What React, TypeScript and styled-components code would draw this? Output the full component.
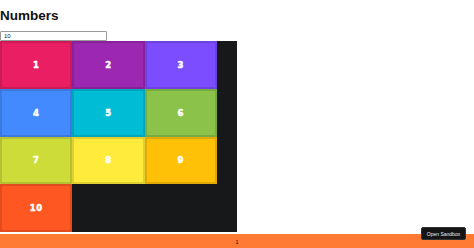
import React, { useState } from 'react';
import styled, { createGlobalStyle } from 'styled-components';

const GlobalStyle = createGlobalStyle`
  html, body {
    margin: 0;
    padding: 0;
    background: #ffffff;
    font-family: "Liberation Sans", Arial, sans-serif;
  }
`;

const COLORS = [
  '#e91e63',
  '#9c27b0',
  '#7c4dff',
  '#448aff',
  '#00bcd4',
  '#8bc34a',
  '#cddc39',
  '#ffeb3b',
  '#ffc107',
  '#ff5722',
];

const Page = styled.div`
  display: flex;
  flex-direction: column;
`;

const Title = styled.h1`
  margin: 7px 0 0;
  height: 24px;
  font-size: 13.5px;
  line-height: 17px;
  font-weight: 700;
  color: #111111;
`;

const CountInput = styled.input`
  box-sizing: border-box;
  width: 107px;
  height: 10px;
  margin: 0;
  padding: 0 3px;
  border: 1px solid #9a9a9a;
  border-radius: 1px;
  font-family: "Liberation Sans", Arial, sans-serif;
  font-size: 6px;
  color: #222222;
  outline: none;
`;

const Grid = styled.div`
  display: grid;
  grid-template-columns: repeat(3, 72.3px);
  grid-auto-rows: 47.75px;
  width: 237px;
  height: 191px;
  background: #161819;
`;

const Tile = styled.div<{ $color: string }>`
  box-sizing: border-box;
  display: flex;
  align-items: center;
  justify-content: center;
  background: ${p => p.$color};
  border: 2.5px solid rgba(0, 0, 0, 0.12);
  color: #ffffff;
  font-family: "DejaVu Sans", sans-serif;
  font-weight: 700;
  font-size: 8.5px;
  letter-spacing: 0.4px;
  -webkit-text-stroke: 0.5px #ffffff;
`;

const Footer = styled.div`
  margin-top: 2px;
  height: 20px;
  background: #ff7a33;
  display: flex;
  justify-content: center;
  padding-top: 5px;
  box-sizing: border-box;
  font-size: 6px;
  color: #222222;
`;

const SandboxButton = styled.a`
  position: fixed;
  right: 8px;
  bottom: 8px;
  width: 45px;
  height: 13px;
  display: flex;
  align-items: center;
  justify-content: center;
  background: #151515;
  border: 1px solid #333333;
  border-radius: 2px;
  color: #eeeeee;
  font-size: 5px;
  box-sizing: border-box;
  text-decoration: none;
`;

export default function App() {
  const [count, setCount] = useState('10');
  const n = Math.max(0, parseInt(count, 10) || 0);

  return (
    <Page>
      <GlobalStyle />
      <Title>Numbers</Title>
      <CountInput value={count} onChange={e => setCount(e.target.value)} />
      <Grid>
        {Array.from({ length: n }, (_, i) => (
          <Tile key={i} $color={COLORS[i % COLORS.length]}>
            {i + 1}
          </Tile>
        ))}
      </Grid>
      <Footer>1</Footer>
      <SandboxButton href="#">Open Sandbox</SandboxButton>
    </Page>
  );
}
